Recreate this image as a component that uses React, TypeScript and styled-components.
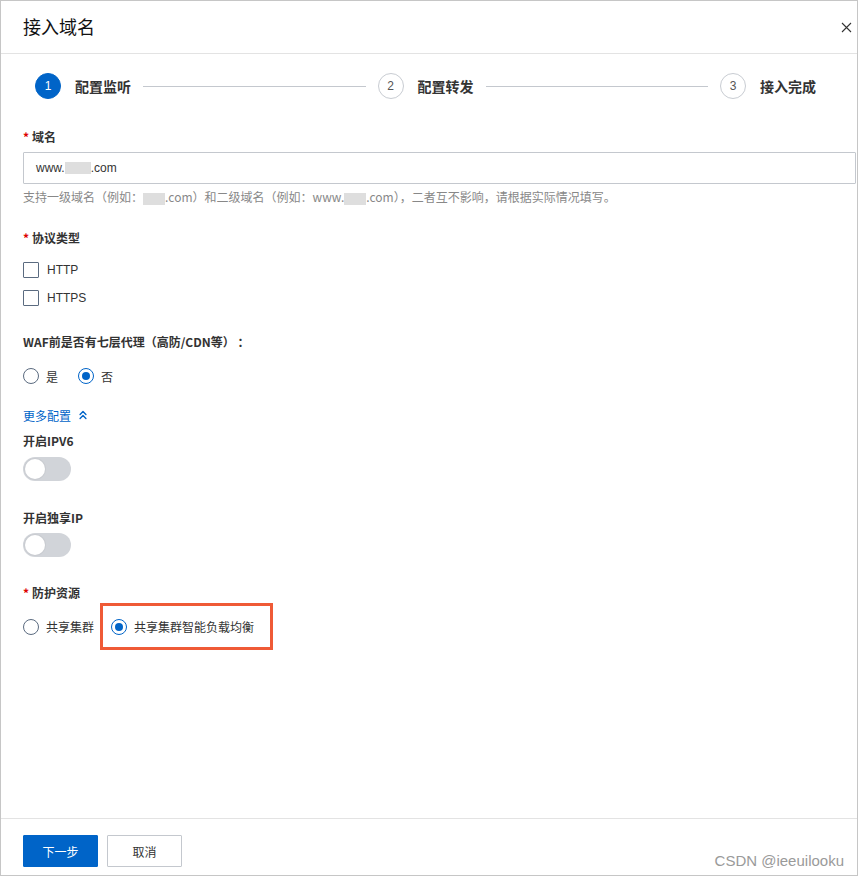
import React from "react";
import styled, { createGlobalStyle } from "styled-components";
import { ChevronsUp } from "lucide-react";

const GlobalStyle = createGlobalStyle`
  * { box-sizing: border-box; }
  body {
    margin: 0;
    background: #fff;
    font-family: "Noto Sans CJK SC", "Liberation Sans", sans-serif;
    color: #333;
  }
`;

const Frame = styled.div`
  position: relative;
  width: 858px;
  height: 876px;
  border: 1px solid #c6c6c6;
  display: flex;
  flex-direction: column;
  background: #fff;
`;

const Header = styled.div`
  height: 53px;
  border-bottom: 1px solid #e3e3e3;
  display: flex;
  align-items: center;
  justify-content: space-between;
  padding: 0 5px 2px 22px;

  h1 {
    margin: 0;
    font-size: 18px;
    font-weight: 400;
    color: #111;
  }
`;

const Close = styled.svg`
  width: 11px;
  height: 11px;
  margin-top: 2px;
`;

const Body = styled.div`
  flex: 1;
  padding: 0 1px 0 22px;
`;

const Steps = styled.div`
  margin-top: 16px;
  height: 32px;
  display: flex;
  align-items: center;
  padding: 0 40px 0 12px;
`;

const StepCircle = styled.div<{ $active?: boolean }>`
  width: 26px;
  height: 26px;
  border-radius: 50%;
  flex-shrink: 0;
  display: flex;
  align-items: center;
  justify-content: center;
  font-size: 12px;
  font-family: "Liberation Sans", sans-serif;
  background: ${(p) => (p.$active ? "#0064c8" : "#fff")};
  color: ${(p) => (p.$active ? "#fff" : "#555")};
  border: 1px solid ${(p) => (p.$active ? "#0064c8" : "#c8ccd2")};
`;

const StepLabel = styled.span`
  margin-left: 14px;
  font-size: 14px;
  font-weight: 700;
  color: #333;
  white-space: nowrap;
`;

const StepLine = styled.div`
  flex: 1;
  height: 1px;
  background: #c4c8ce;
  margin: 0 12px;
`;

const Label = styled.div<{ $gap: number }>`
  margin-top: ${(p) => p.$gap}px;
  height: 20px;
  line-height: 20px;
  font-size: 12px;
  font-weight: 700;
  color: #333;
`;

const Star = styled.span`
  color: #d00;
  margin-right: 3px;
  font-weight: 700;
`;

const Input = styled.div`
  margin-top: 5px;
  height: 32px;
  border: 1px solid #c4c8ce;
  border-radius: 1px;
  display: flex;
  align-items: center;
  padding: 0 12px;
  font-size: 12px;
  color: #333;
  font-family: "Liberation Sans", "Noto Sans CJK SC", sans-serif;
`;

const Blur = styled.span<{ $w: number }>`
  display: inline-block;
  width: ${(p) => p.$w}px;
  height: 12px;
  background: #dedede;
  vertical-align: middle;
`;

const Help = styled.div`
  margin-top: 4px;
  height: 18px;
  line-height: 18px;
  font-size: 12px;
  color: #888;
`;

const CheckRow = styled.label<{ $gap: number }>`
  margin-top: ${(p) => p.$gap}px;
  height: 28px;
  display: flex;
  align-items: center;
  gap: 8px;
  font-size: 12px;
  color: #333;
  font-family: "Liberation Sans", sans-serif;
`;

const Box = styled.span`
  width: 16px;
  height: 16px;
  border: 1px solid #5b6b80;
  border-radius: 1px;
`;

const RadioRow = styled.div<{ $gap: number }>`
  margin-top: ${(p) => p.$gap}px;
  display: flex;
  align-items: center;
  gap: 20px;
`;

const RadioItem = styled.span`
  display: flex;
  align-items: center;
  gap: 7px;
  font-size: 12px;
  color: #333;
  height: 28px;
`;

const Dot = styled.span<{ $on?: boolean }>`
  width: 16px;
  height: 16px;
  border-radius: 50%;
  border: 1px solid ${(p) => (p.$on ? "#0064c8" : "#5b6b80")};
  display: flex;
  align-items: center;
  justify-content: center;

  &::after {
    content: "";
    width: 8px;
    height: 8px;
    border-radius: 50%;
    background: ${(p) => (p.$on ? "#0064c8" : "transparent")};
  }
`;

const Highlight = styled.span`
  margin-left: -14px;
  border: 3px solid #ef5a36;
  padding: 7px 8px;
  display: flex;
  align-items: center;
  width: 173px;
  height: 47px;
`;

const MoreLink = styled.div`
  margin-top: 15px;
  height: 20px;
  display: flex;
  align-items: center;
  gap: 5px;
  font-size: 12px;
  color: #0064c8;
`;

const Toggle = styled.div<{ $gap: number }>`
  margin-top: ${(p) => p.$gap}px;
  width: 48px;
  height: 24px;
  border-radius: 12px;
  background: #d1d4d9;
  padding: 2px;

  &::before {
    content: "";
    display: block;
    width: 20px;
    height: 20px;
    border-radius: 50%;
    background: #fff;
    box-shadow: 0 0 0 1px #c9ccd1;
  }
`;

const Footer = styled.div`
  border-top: 1px solid #e3e3e3;
  height: 57px;
  padding: 16px 22px 0;
  display: flex;
  gap: 9px;
`;

const Button = styled.button<{ $primary?: boolean }>`
  width: 75px;
  height: 32px;
  font-size: 12px;
  font-family: "Noto Sans CJK SC", sans-serif;
  border-radius: 1px;
  cursor: pointer;
  background: ${(p) => (p.$primary ? "#0064c8" : "#fff")};
  color: ${(p) => (p.$primary ? "#fff" : "#333")};
  border: 1px solid ${(p) => (p.$primary ? "#0064c8" : "#c4c8ce")};
`;

const Watermark = styled.div`
  position: absolute;
  right: 13px;
  bottom: 6px;
  font-family: "Liberation Sans", sans-serif;
  font-size: 15px;
  color: #9a9a9a;
`;

const steps = ["配置监听", "配置转发", "接入完成"];

export default function App() {
  return (
    <>
      <GlobalStyle />
      <Frame>
        <Header>
          <h1>接入域名</h1>
          <Close viewBox="0 0 11 11">
            <path d="M1 1L10 10M10 1L1 10" stroke="#333" strokeWidth="1.1" />
          </Close>
        </Header>

        <Body>
          <Steps>
            {steps.map((s, i) => (
              <React.Fragment key={s}>
                <StepCircle $active={i === 0}>{i + 1}</StepCircle>
                <StepLabel>{s}</StepLabel>
                {i < steps.length - 1 && <StepLine />}
              </React.Fragment>
            ))}
          </Steps>

          <Label $gap={25}>
            <Star>*</Star>域名
          </Label>
          <Input>
            www.<Blur $w={26} />.com
          </Input>
          <Help>
            支持一级域名（例如：<Blur $w={22} />.com）和二级域名（例如：www.<Blur $w={22} />.com），二者互不影响，请根据实际情况填写。
          </Help>

          <Label $gap={22}>
            <Star>*</Star>协议类型
          </Label>
          <CheckRow $gap={8}>
            <Box />
            HTTP
          </CheckRow>
          <CheckRow $gap={0}>
            <Box />
            HTTPS
          </CheckRow>

          <Label $gap={20}>WAF前是否有七层代理（高防/CDN等） ：</Label>
          <RadioRow $gap={10}>
            <RadioItem>
              <Dot />是
            </RadioItem>
            <RadioItem>
              <Dot $on />否
            </RadioItem>
          </RadioRow>

          <MoreLink>
            更多配置
            <ChevronsUp size={14} strokeWidth={2.4} />
          </MoreLink>

          <Label $gap={6}>开启IPV6</Label>
          <Toggle $gap={6} />

          <Label $gap={27}>开启独享IP</Label>
          <Toggle $gap={5} />

          <Label $gap={26}>
            <Star>*</Star>防护资源
          </Label>
          <RadioRow $gap={0}>
            <RadioItem>
              <Dot />共享集群
            </RadioItem>
            <Highlight>
              <RadioItem>
                <Dot $on />共享集群智能负载均衡
              </RadioItem>
            </Highlight>
          </RadioRow>
        </Body>

        <Footer>
          <Button $primary>下一步</Button>
          <Button>取消</Button>
        </Footer>
        <Watermark>CSDN @ieeuilooku</Watermark>
      </Frame>
    </>
  );
}
